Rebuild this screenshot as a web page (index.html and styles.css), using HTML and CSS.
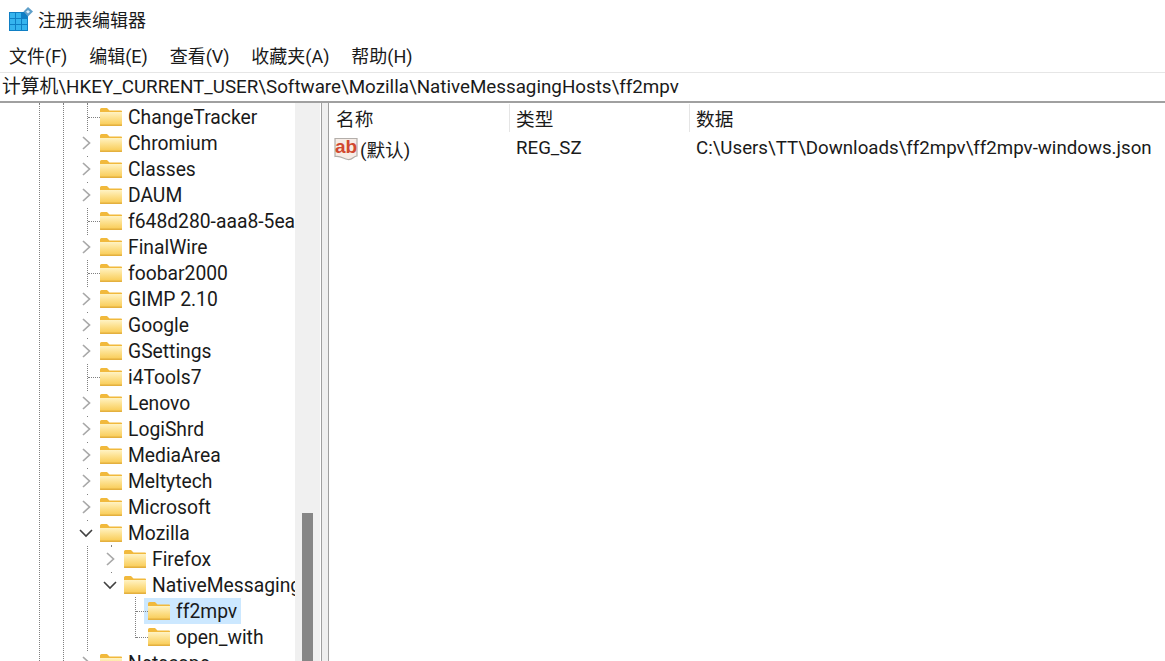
FILE: index.html
```html
<!DOCTYPE html>
<html lang="zh-CN">
<head>
  <meta charset="UTF-8" />
  <title>注册表编辑器</title>
  <link rel="stylesheet" href="styles.css">
</head>
<body>

  <!-- Shared icons -->
  <svg class="defs" width="0" height="0">
    <defs>
      <linearGradient id="folder-fill" x1="0" y1="0" x2="0" y2="1">
        <stop offset="0" stop-color="#fff3c4" />
        <stop offset="0.45" stop-color="#fde08c" />
        <stop offset="1" stop-color="#f8c94f" />
      </linearGradient>
      <symbol id="folder" viewBox="0 0 22 18">
        <path d="M0 1.5Q0 0 1.5 0H7L9.5 2.5H21Q22 2.5 22 3.5V6H0Z" fill="#f1b93c" />
        <path d="M0 4H22V17Q22 18 21 18H1Q0 18 0 17Z" fill="url(#folder-fill)" />
        <path d="M0 17.2H22" stroke="#dfa93a" stroke-width="1.2" />
      </symbol>
      <symbol id="closed" viewBox="0 0 12 16">
        <path d="M3 2L9.5 8L3 14" fill="none" stroke="#a8a8a8" stroke-width="1.7" />
      </symbol>
      <symbol id="open" viewBox="0 0 16 12">
        <path d="M2 3L8 9L14 3" fill="none" stroke="#404040" stroke-width="1.6" />
      </symbol>
    </defs>
  </svg>

  <div class="window">
    <div class="titlebar">
      <svg class="app-icon" viewBox="0 0 24 24" width="24" height="24">
        <rect x="0" y="5" width="19" height="19" fill="#0f7fc4" />
        <g fill="#35b4ee">
          <rect x="1" y="6" width="5" height="5" />
          <rect x="7" y="6" width="5" height="5" />
          <rect x="1" y="12" width="5" height="5" />
          <rect x="7" y="12" width="5" height="5" />
          <rect x="13" y="12" width="5" height="5" />
          <rect x="1" y="18" width="5" height="5" />
          <rect x="7" y="18" width="5" height="5" />
          <rect x="13" y="18" width="5" height="5" />
        </g>
        <path d="M19 0L24 4.5L19 9.5L14.5 4.5Z" fill="#5f9fc9" />
        <path d="M19 3L21 4.7L19 6.5L17 4.7Z" fill="#d9eefa" />
      </svg>
      <span class="app-title">注册表编辑器</span>
    </div>

    <div class="menubar">
      <span class="menu-item">文件(F)</span>
      <span class="menu-item">编辑(E)</span>
      <span class="menu-item">查看(V)</span>
      <span class="menu-item">收藏夹(A)</span>
      <span class="menu-item">帮助(H)</span>
    </div>

    <div class="address">计算机\HKEY_CURRENT_USER\Software\Mozilla\NativeMessagingHosts\ff2mpv</div>

    <div class="panes">
      <div class="tree">
        <i class="guide g1"></i>
        <i class="guide g2"></i>
        <i class="guide g3"></i>
        <i class="guide g4"></i>
        <i class="guide g5"></i>

        <div class="row"><span class="twisty leaf"></span><span class="node"><svg class="folder"><use href="#folder" /></svg>ChangeTracker</span></div>
        <div class="row"><span class="twisty"><svg class="chevron"><use href="#closed" /></svg></span><span class="node"><svg class="folder"><use href="#folder" /></svg>Chromium</span></div>
        <div class="row"><span class="twisty"><svg class="chevron"><use href="#closed" /></svg></span><span class="node"><svg class="folder"><use href="#folder" /></svg>Classes</span></div>
        <div class="row"><span class="twisty"><svg class="chevron"><use href="#closed" /></svg></span><span class="node"><svg class="folder"><use href="#folder" /></svg>DAUM</span></div>
        <div class="row"><span class="twisty leaf"></span><span class="node"><svg class="folder"><use href="#folder" /></svg>f648d280-aaa8-5ea4-8f1c-2b7a</span></div>
        <div class="row"><span class="twisty"><svg class="chevron"><use href="#closed" /></svg></span><span class="node"><svg class="folder"><use href="#folder" /></svg>FinalWire</span></div>
        <div class="row"><span class="twisty leaf"></span><span class="node"><svg class="folder"><use href="#folder" /></svg>foobar2000</span></div>
        <div class="row"><span class="twisty"><svg class="chevron"><use href="#closed" /></svg></span><span class="node"><svg class="folder"><use href="#folder" /></svg>GIMP 2.10</span></div>
        <div class="row"><span class="twisty"><svg class="chevron"><use href="#closed" /></svg></span><span class="node"><svg class="folder"><use href="#folder" /></svg>Google</span></div>
        <div class="row"><span class="twisty"><svg class="chevron"><use href="#closed" /></svg></span><span class="node"><svg class="folder"><use href="#folder" /></svg>GSettings</span></div>
        <div class="row"><span class="twisty leaf"></span><span class="node"><svg class="folder"><use href="#folder" /></svg>i4Tools7</span></div>
        <div class="row"><span class="twisty"><svg class="chevron"><use href="#closed" /></svg></span><span class="node"><svg class="folder"><use href="#folder" /></svg>Lenovo</span></div>
        <div class="row"><span class="twisty"><svg class="chevron"><use href="#closed" /></svg></span><span class="node"><svg class="folder"><use href="#folder" /></svg>LogiShrd</span></div>
        <div class="row"><span class="twisty"><svg class="chevron"><use href="#closed" /></svg></span><span class="node"><svg class="folder"><use href="#folder" /></svg>MediaArea</span></div>
        <div class="row"><span class="twisty"><svg class="chevron"><use href="#closed" /></svg></span><span class="node"><svg class="folder"><use href="#folder" /></svg>Meltytech</span></div>
        <div class="row"><span class="twisty"><svg class="chevron"><use href="#closed" /></svg></span><span class="node"><svg class="folder"><use href="#folder" /></svg>Microsoft</span></div>
        <div class="row"><span class="twisty"><svg class="chevron down"><use href="#open" /></svg></span><span class="node"><svg class="folder"><use href="#folder" /></svg>Mozilla</span></div>
        <div class="row d4"><span class="twisty"><svg class="chevron"><use href="#closed" /></svg></span><span class="node"><svg class="folder"><use href="#folder" /></svg>Firefox</span></div>
        <div class="row d4"><span class="twisty"><svg class="chevron down"><use href="#open" /></svg></span><span class="node"><svg class="folder"><use href="#folder" /></svg>NativeMessagingHosts</span></div>
        <div class="row d5"><span class="twisty leaf"></span><span class="node selected"><svg class="folder"><use href="#folder" /></svg>ff2mpv</span></div>
        <div class="row d5"><span class="twisty leaf"></span><span class="node"><svg class="folder"><use href="#folder" /></svg>open_with</span></div>
        <div class="row"><span class="twisty"><svg class="chevron"><use href="#closed" /></svg></span><span class="node"><svg class="folder"><use href="#folder" /></svg>Netscape</span></div>
      </div>

      <div class="scrollbar"><div class="thumb"></div></div>
      <div class="splitter"></div>

      <div class="values">
        <div class="value-row header">
          <span class="cell">名称</span>
          <span class="cell">类型</span>
          <span class="cell">数据</span>
        </div>
        <div class="value-row">
          <span class="cell name-cell">
            <svg class="ab-icon" viewBox="0 0 24 24" width="24" height="24">
              <path d="M1 1.5H23V19C19 19 19 23 14 22.5C9 22 8 18.5 1 19.5Z" fill="#f6ece6" stroke="#b3aeaa" stroke-width="1.2" />
              <text class="ab-text" x="12" y="16" text-anchor="middle">ab</text>
            </svg>(默认)
          </span>
          <span class="cell">REG_SZ</span>
          <span class="cell">C:\Users\TT\Downloads\ff2mpv\ff2mpv-windows.json</span>
        </div>
      </div>
    </div>
  </div>

</body>
</html>
```

FILE: styles.css
```css
* {
  margin: 0;
  padding: 0;
  box-sizing: border-box;
}

html, body {
  height: 100%;
  overflow: hidden;
}

body {
  background: #ffffff;
  color: #1a1a1a;
  font-family: Roboto, "Noto Sans CJK SC", sans-serif;
  font-size: 19.3px;
}

.defs {
  position: absolute;
}

.window {
  height: 100vh;
  display: flex;
  flex-direction: column;
}

.titlebar {
  height: 40px;
  display: flex;
  align-items: center;
  padding: 0 0 2px 9px;
  gap: 5px;
}

.app-title {
  font-size: 18px;
}

.menubar {
  height: 32px;
  display: flex;
  align-items: center;
  padding: 0 0 3px 9px;
  gap: 21.8px;
  font-size: 18px;
}

.address {
  height: 31px;
  padding-left: 2px;
  font-size: 18.8px;
  line-height: 29px;
  border-top: 1px solid #e6e6e6;
  border-bottom: 2px solid #a0a0a0;
  white-space: nowrap;
  overflow: hidden;
}

.panes {
  flex: 1;
  min-height: 0;
  display: flex;
}

/* tree */
.tree {
  position: relative;
  width: 295px;
  flex: none;
  overflow: hidden;
  padding-top: 1px;
}

.guide {
  position: absolute;
  width: 0;
  border-left: 1px dotted #808080;
}

.g1 { left: 39px; top: 0; bottom: 0; }
.g2 { left: 63px; top: 0; bottom: 0; }
.g3 { left: 87px; top: 0; bottom: 10px; }
.g4 { left: 111px; top: 442px; height: 52px; }
.g5 { left: 135px; top: 494px; height: 41px; }

.row {
  height: 26px;
  padding-left: 76px;
  display: flex;
  align-items: center;
  white-space: nowrap;
}

.row.d4 { padding-left: 100px; }
.row.d5 { padding-left: 124px; }

.twisty {
  position: relative;
  z-index: 1;
  width: 20px;
  height: 24px;
  flex: none;
  display: flex;
  align-items: center;
  justify-content: center;
  background: #ffffff;
}

.twisty.leaf {
  background: none;
}

.twisty.leaf::after {
  content: "";
  position: absolute;
  left: 12px;
  right: -4px;
  top: 12px;
  border-top: 1px dotted #808080;
}

.chevron {
  width: 12px;
  height: 16px;
}

.chevron.down {
  width: 16px;
  height: 12px;
}

.node {
  height: 26px;
  display: flex;
  align-items: center;
  padding: 0 4px 0 4px;
}

.node.selected {
  background: #cce8ff;
}

.folder {
  width: 22px;
  height: 18px;
  margin-right: 6px;
  flex: none;
}

/* scrollbar and splitter */
.scrollbar {
  width: 25px;
  flex: none;
  background: #f0f0f0;
  padding: 410px 7px 0;
}

.thumb {
  height: 100%;
  background: #868686;
}

.splitter {
  width: 8px;
  flex: none;
  margin-left: 1px;
  background: #f0f0f0;
  border-left: 1px solid #a0a0a0;
  border-right: 1px solid #a0a0a0;
}

/* values list */
.values {
  flex: 1;
  min-width: 0;
}

.value-row {
  display: grid;
  grid-template-columns: 181px 180px 1fr;
  height: 30px;
  align-items: center;
  white-space: nowrap;
  font-size: 18.7px;
}

.value-row.header {
  height: 30px;
}

.cell {
  padding-left: 6px;
}

.header .cell {
  height: 28px;
  line-height: 32px;
  border-right: 1px solid #e5e5e5;
}

.header .cell:first-child {
  padding-left: 7px;
}

.header .cell:last-child {
  border-right: none;
}

.name-cell {
  display: flex;
  align-items: center;
  padding-left: 5px;
  gap: 2px;
}

.ab-icon {
  flex: none;
  margin-top: 2px;
}

.ab-text {
  font-family: "Liberation Sans", sans-serif;
  font-size: 19px;
  font-weight: 700;
  fill: #d1492f;
}
```
